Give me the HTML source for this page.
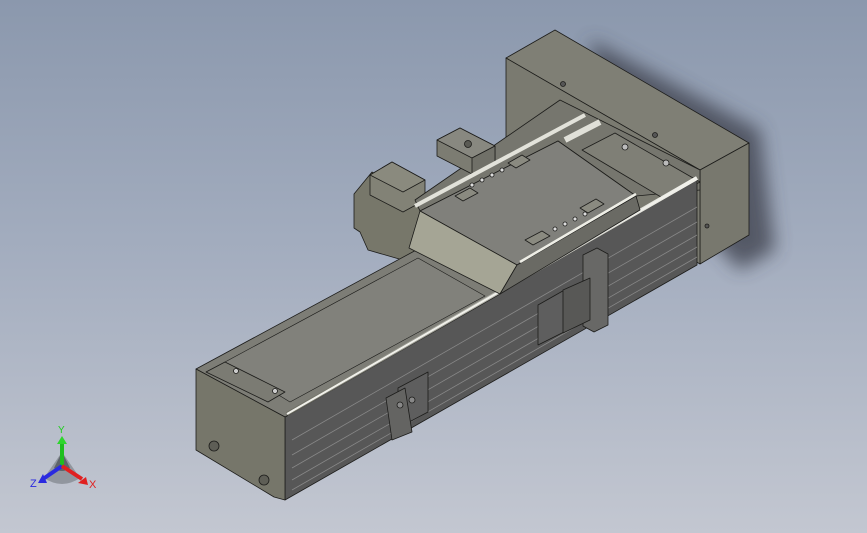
<!DOCTYPE html>
<html><head><meta charset="utf-8"><style>
html,body{margin:0;padding:0}
body{width:867px;height:533px;overflow:hidden;background:linear-gradient(180deg,#8b98ad 0%,#a2acbe 45%,#c3c7d1 100%);font-family:"Liberation Sans",sans-serif}
svg{position:absolute;left:0;top:0}
</style></head><body>
<svg width="867" height="533" viewBox="0 0 867 533">
<defs>
<filter id="b" x="-30%" y="-30%" width="160%" height="160%"><feGaussianBlur stdDeviation="9"/></filter>
<linearGradient id="hl" x1="0" y1="0" x2="0" y2="1"><stop offset="0" stop-color="#f4f4ee"/><stop offset="1" stop-color="#6a6a60"/></linearGradient>
</defs>
<polygon points="590,40 760,130 775,250 740,270 600,120" fill="#3a3e48" opacity="0.75" filter="url(#b)"/>
<g stroke="#1c1c1a" stroke-width="0.8" stroke-linejoin="round">
<!-- motor block -->
<polygon points="506,58 555,30 749,143 700,170" fill="#7f7f75"/>
<polygon points="700,170 749,143 749,235 700,264" fill="#78786e"/>
<polygon points="506,58 700,170 700,264 506,150" fill="#7a7a70"/>
<circle cx="563" cy="84" r="2.5" fill="#555"/><circle cx="655" cy="135" r="2.5" fill="#555"/><circle cx="707" cy="226" r="2" fill="#555"/>
<!-- back left bracket -->
<polygon points="354,194 372,172 420,200 420,265 368,250 360,232 354,228" fill="#77776a"/>
<polygon points="370,175 392,162 425,180 425,200 403,212 370,195" fill="#828276"/>
<polygon points="370,175 392,162 425,180 403,192" fill="#8a8a7e"/>
<!-- upper plate behind carriage -->
<polygon points="415,200 560,100 700,170 700,190 636,196 558,141 420,211" fill="#76766e"/>
<!-- slot block -->
<polygon points="437,140 460,128 495,146 495,162 472,174 437,156" fill="#7c7c72"/>
<polygon points="437,140 460,128 495,146 472,158" fill="#888880"/>
<polygon points="472,158 495,146 495,162 472,174" fill="#707068"/>
<circle cx="468" cy="144" r="3.5" fill="#5a5a54"/>
<!-- rod -->
<line x1="415" y1="206" x2="585" y2="115" stroke="#e2e2da" stroke-width="4"/>
<line x1="565" y1="140" x2="600" y2="122" stroke="#e0e0d8" stroke-width="6"/>
<!-- right top plate -->
<polygon points="582,150 615,133 700,182 666,200" fill="#7f7f76"/>
<circle cx="625" cy="147" r="3" fill="#bbb"/><circle cx="666" cy="163" r="3" fill="#bbb"/>
<!-- beam side face -->
<polygon points="285,417 697,180 697,265 285,500" fill="#575757"/>
<g stroke="#888" stroke-width="0.8">
<line x1="292" y1="440" x2="697" y2="207"/><line x1="292" y1="455" x2="697" y2="222"/>
<line x1="292" y1="468" x2="697" y2="235"/><line x1="292" y1="480" x2="697" y2="247"/>
<line x1="292" y1="490" x2="697" y2="257"/>
</g>
<!-- beam top -->
<polygon points="196,369 420,248 500,294 285,417" fill="#7d7d76"/>
<polygon points="225,362 418,258 485,296 290,402" fill="#81817b" stroke-width="0.6"/>
<polygon points="206,372 225,362 285,392 268,402" fill="#7b7b73"/>
<circle cx="236" cy="371" r="2.5" fill="#ccc"/><circle cx="275" cy="391" r="2.5" fill="#ccc"/>
<line x1="287" y1="414" x2="697" y2="178" stroke="url(#hl)" stroke-width="4"/>
<line x1="287" y1="414" x2="697" y2="178" stroke="#f0f0ea" stroke-width="2"/>
<!-- end face -->
<polygon points="196,369 285,417 285,500 274,497 196,450" fill="#76766a"/>
<circle cx="214" cy="446" r="5" fill="#5e5e56"/><circle cx="264" cy="480" r="5" fill="#5e5e56"/>
<!-- carriage -->
<polygon points="420,211 558,141 636,196 517,265" fill="#80807b"/>
<polygon points="420,211 517,265 500,294 409,248" fill="#a5a595"/>
<polygon points="517,265 636,196 640,210 500,294" fill="#6a6a64"/>
<polygon points="455,196 470,188 478,193 463,201" fill="#8a8a80"/><polygon points="508,163 522,155 530,160 516,168" fill="#8a8a80"/>
<polygon points="525,240 542,231 550,236 533,245" fill="#8a8a80"/><polygon points="580,208 596,199 604,204 588,213" fill="#8a8a80"/>
<circle cx="472" cy="185" r="2" fill="#ddd"/><circle cx="482" cy="180" r="2" fill="#ddd"/><circle cx="492" cy="175" r="2" fill="#ddd"/><circle cx="502" cy="170" r="2" fill="#ddd"/>
<circle cx="555" cy="229" r="2" fill="#ddd"/><circle cx="565" cy="224" r="2" fill="#ddd"/><circle cx="575" cy="219" r="2" fill="#ddd"/><circle cx="585" cy="214" r="2" fill="#ddd"/>
<line x1="520" y1="262" x2="636" y2="194" stroke="#eeeee6" stroke-width="2.5"/>
<!-- sensor brackets -->
<polygon points="538,305 568,288 568,330 538,345" fill="#5e5e5e"/>
<polygon points="583,255 597,248 608,254 608,325 594,332 583,326" fill="#686866"/>
<polygon points="563,290 590,278 590,320 563,333" fill="#585856"/>
<polygon points="398,388 428,372 428,412 398,428" fill="#5e5e5e"/>
<polygon points="386,398 405,388 412,432 392,440" fill="#646462"/>
<circle cx="400" cy="405" r="3" fill="#888"/><circle cx="412" cy="400" r="3" fill="#888"/>
</g>
<!-- triad -->
<g>
<path d="M62 452 L44 478 Q62 490 80 478 Z" fill="#6e7278" opacity="0.55"/>
<path d="M62 452 L54 468 Q62 474 70 468 Z" fill="#3e4248" opacity="0.6"/>
<line x1="62" y1="466" x2="62" y2="442" stroke="#1fbf1f" stroke-width="4"/>
<polygon points="57,444 62,436 67,444" fill="#2ed52e"/>
<line x1="62" y1="466" x2="43" y2="479" stroke="#2a2ae0" stroke-width="4"/>
<polygon points="38,483 43,474 47,483" fill="#2a2ae0"/>
<line x1="62" y1="466" x2="82" y2="479" stroke="#e02020" stroke-width="4"/>
<polygon points="78,483 86,477 88,485" fill="#e02020"/>
<text x="58" y="433" font-size="10" fill="#1fcf1f">Y</text>
<text x="30" y="487" font-size="11" fill="#2a2ae0">Z</text>
<text x="89" y="488" font-size="11" fill="#e02020">X</text>
</g>
</svg>
</body></html>
